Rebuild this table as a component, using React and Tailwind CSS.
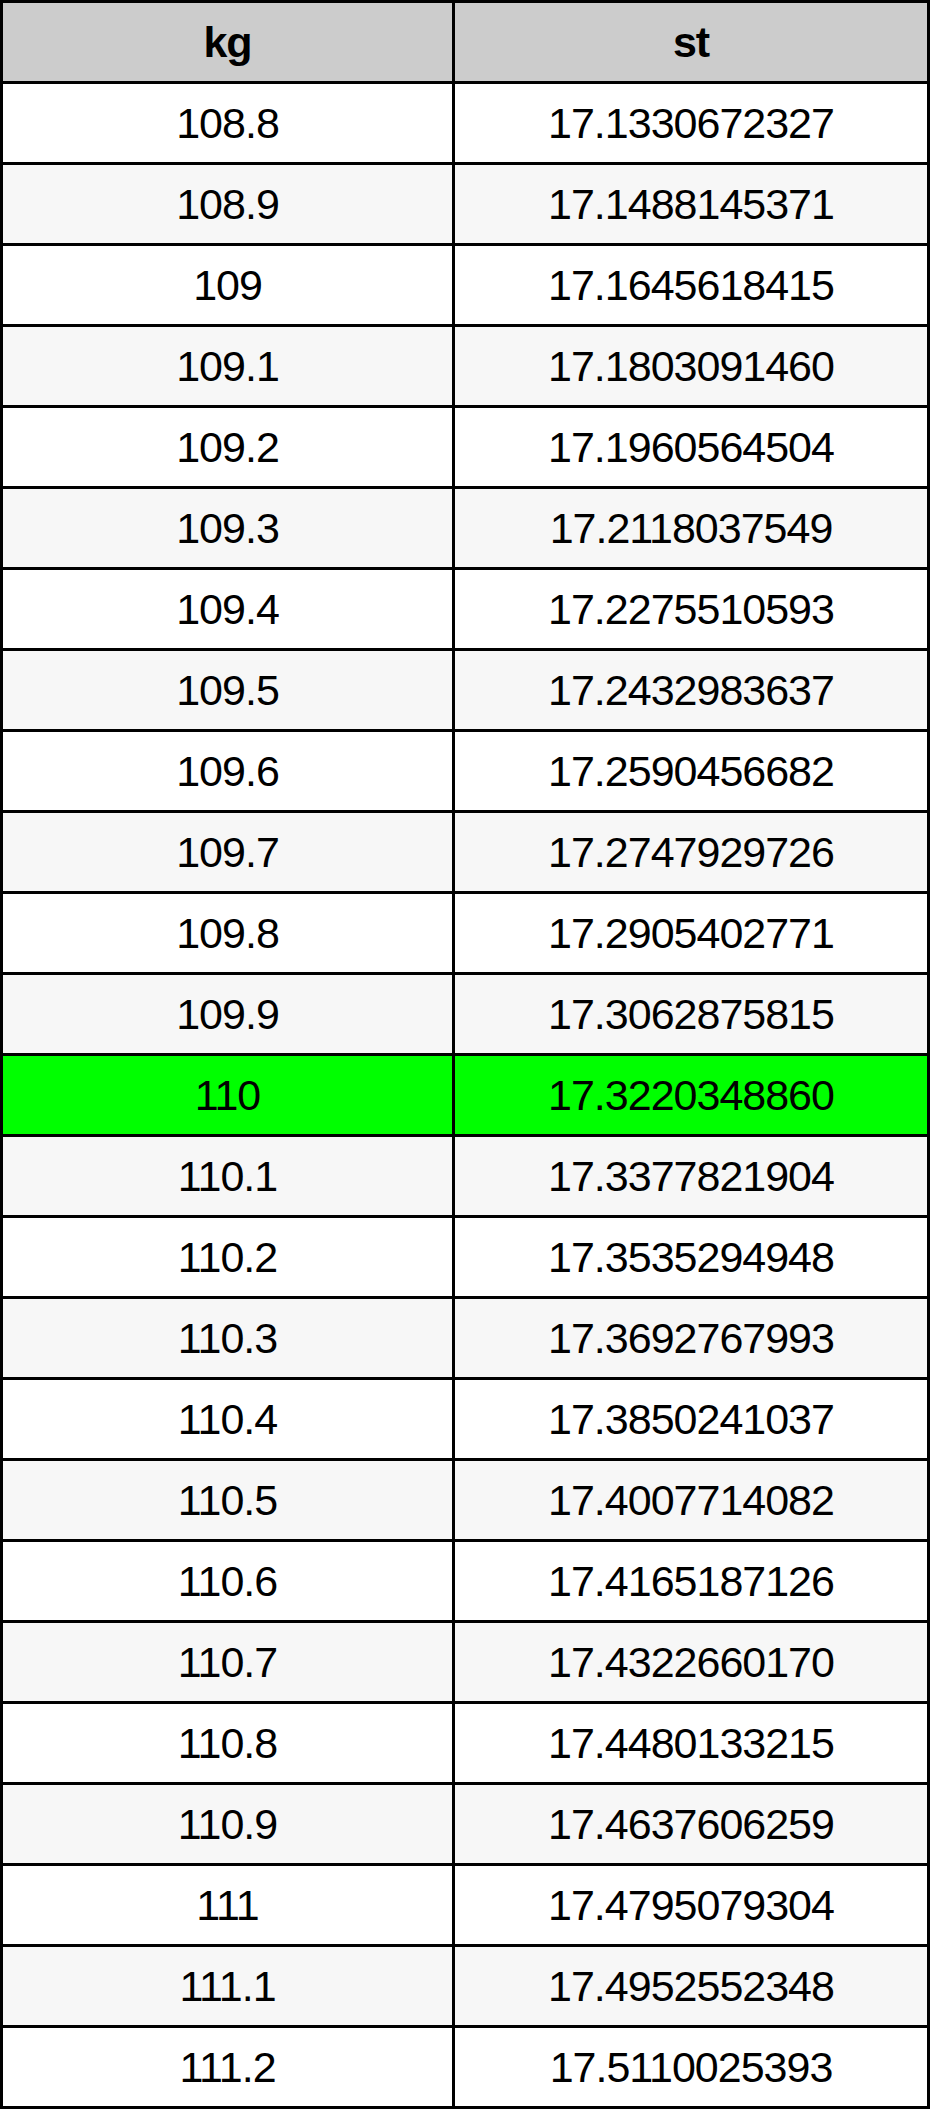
import React from 'react';

// ============= DATA =============
const ROWS = [
  ['108.8', '17.1330672327'],
  ['108.9', '17.1488145371'],
  ['109', '17.1645618415'],
  ['109.1', '17.1803091460'],
  ['109.2', '17.1960564504'],
  ['109.3', '17.2118037549'],
  ['109.4', '17.2275510593'],
  ['109.5', '17.2432983637'],
  ['109.6', '17.2590456682'],
  ['109.7', '17.2747929726'],
  ['109.8', '17.2905402771'],
  ['109.9', '17.3062875815'],
  ['110', '17.3220348860'],
  ['110.1', '17.3377821904'],
  ['110.2', '17.3535294948'],
  ['110.3', '17.3692767993'],
  ['110.4', '17.3850241037'],
  ['110.5', '17.4007714082'],
  ['110.6', '17.4165187126'],
  ['110.7', '17.4322660170'],
  ['110.8', '17.4480133215'],
  ['110.9', '17.4637606259'],
  ['111', '17.4795079304'],
  ['111.1', '17.4952552348'],
  ['111.2', '17.5110025393'],
];

const HIGHLIGHT = '110';

// ============= SUB COMPONENTS =============
const Cell = ({ children, wide, bold }) => (
  <div
    className={`flex items-center justify-center h-[81px] border-r-[3px] border-b-[3px] border-black text-[43px] tracking-[-1px] text-black ${
      wide ? 'w-[475px]' : 'w-[452px]'
    } ${bold ? 'font-bold' : 'font-normal'}`}
  >
    {children}
  </div>
);

const Row = ({ kg, st, index }) => {
  let bg = index % 2 === 0 ? 'bg-white' : 'bg-[#f7f7f7]';
  if (kg === HIGHLIGHT) bg = 'bg-[#00ff00]';
  return (
    <div className={`flex ${bg}`}>
      <Cell>{kg}</Cell>
      <Cell wide>{st}</Cell>
    </div>
  );
};

const App = () => {
  return (
    <div className="w-[930px] bg-white" style={{ fontFamily: '"Liberation Sans", Arial, sans-serif' }}>
      <div className="w-[930px] border-t-[3px] border-l-[3px] border-black">
        <div className="flex bg-[#cccccc]">
          <Cell bold>kg</Cell>
          <Cell wide bold>st</Cell>
        </div>
        {ROWS.map(([kg, st], i) => (
          <Row key={kg} kg={kg} st={st} index={i} />
        ))}
      </div>
    </div>
  );
};

export default App;
